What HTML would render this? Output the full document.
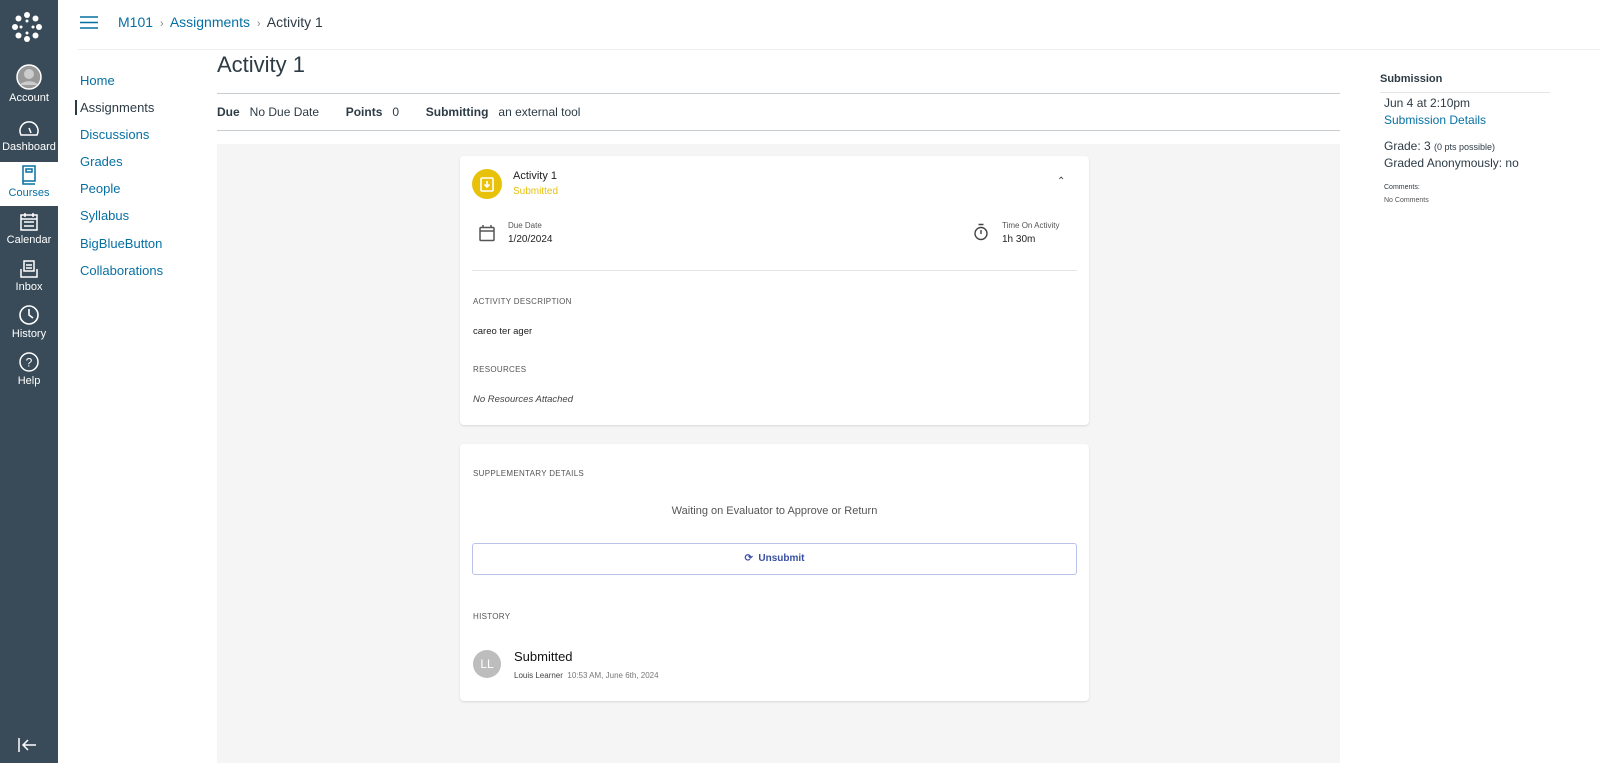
<!DOCTYPE html>
<html><head><meta charset="utf-8"><style>
*{box-sizing:border-box;margin:0;padding:0}
body{width:1600px;height:763px;overflow:hidden;font-family:"Liberation Sans",sans-serif;background:#fff;position:relative;color:#2d3b45}
.side{position:absolute;left:0;top:0;width:58px;height:763px;background:#394b58}
.nv{position:absolute;left:0;width:58px;text-align:center;color:#fff;font-size:11px}
.nv svg{display:block;margin:0 auto 2px}
.a{position:absolute;white-space:nowrap}
.cn a{position:absolute;left:80px;color:#0770a3;font-size:13px;text-decoration:none}
.card{position:absolute;left:460px;width:629px;background:#fff;border-radius:4px;box-shadow:0 1px 2px rgba(0,0,0,.12)}
.r{font-family:"Liberation Sans",sans-serif}
.lbl{position:absolute;left:13px;font-size:8px;color:#555;letter-spacing:.3px}
</style></head><body>
<div class="side">
 <svg style="position:absolute;left:10px;top:10px" width="34" height="34" viewBox="0 0 34 34" fill="#fff"><circle cx="17" cy="5" r="3"/><circle cx="17" cy="29" r="3"/><circle cx="5" cy="17" r="3"/><circle cx="29" cy="17" r="3"/><circle cx="8.5" cy="8.5" r="3"/><circle cx="25.5" cy="8.5" r="3"/><circle cx="8.5" cy="25.5" r="3"/><circle cx="25.5" cy="25.5" r="3"/><circle cx="17" cy="11" r="1.5"/><circle cx="17" cy="23" r="1.5"/><circle cx="11" cy="17" r="1.5"/><circle cx="23" cy="17" r="1.5"/></svg>
 <div class="nv" style="top:64px"><svg width="26" height="26" viewBox="0 0 26 26"><circle cx="13" cy="13" r="12" fill="#999" stroke="#fff" stroke-width="1.5"/><circle cx="13" cy="10" r="5" fill="#ccc"/><path d="M4 21c3-5 15-5 18 0" fill="#ccc"/></svg>Account</div>
 <div class="nv" style="top:119px"><svg width="22" height="20" viewBox="0 0 22 20" fill="none" stroke="#fff" stroke-width="1.5"><path d="M3 16a9 9 0 1 1 16 0z"/><path d="M11 9l2 5"/></svg>Dashboard</div>
 <div class="nv" style="top:162px;height:44px;background:#fff;color:#0770a3;padding-top:3px"><svg width="18" height="20" viewBox="0 0 18 20" fill="none" stroke="#0770a3" stroke-width="1.5"><rect x="3" y="1" width="12" height="15"/><rect x="6" y="4" width="6" height="3"/><path d="M3 16v3h12"/></svg>Courses</div>
 <div class="nv" style="top:212px"><svg width="20" height="20" viewBox="0 0 20 20" fill="none" stroke="#fff" stroke-width="1.5"><rect x="2" y="3" width="16" height="15"/><path d="M2 7h16M6 1v4M14 1v4M5 10h10M5 14h10"/></svg>Calendar</div>
 <div class="nv" style="top:259px"><svg width="20" height="20" viewBox="0 0 20 20" fill="none" stroke="#fff" stroke-width="1.5"><rect x="5" y="2" width="10" height="10"/><path d="M2 10v8h16v-8M7 6h6M7 9h6"/></svg>Inbox</div>
 <div class="nv" style="top:304px"><svg width="22" height="22" viewBox="0 0 22 22" fill="none" stroke="#fff" stroke-width="1.6"><circle cx="11" cy="11" r="9"/><path d="M11 5v6l4 3"/></svg>History</div>
 <div class="nv" style="top:351px"><svg width="22" height="22" viewBox="0 0 22 22" fill="none" stroke="#fff" stroke-width="1.5"><circle cx="11" cy="11" r="9"/><text x="11" y="15.5" text-anchor="middle" font-size="12" fill="#fff" stroke="none" font-family="Liberation Sans">?</text></svg>Help</div>
 <svg style="position:absolute;left:18px;top:738px" width="20" height="14" viewBox="0 0 20 14" fill="none" stroke="#fff" stroke-width="1.5"><path d="M1 0v14M18 7H5M10 2L5 7l5 5"/></svg>
</div>
<svg style="position:absolute;left:80px;top:16px" width="18" height="13" viewBox="0 0 18 13" stroke="#0770a3" stroke-width="1.5"><path d="M0 1h18M0 6.5h18M0 12h18"/></svg>
<div class="a" style="left:118px;top:14px;font-size:14px;color:#0770a3">M101 <span style="color:#888;font-size:11px">&nbsp;›&nbsp;</span> Assignments <span style="color:#888;font-size:11px">&nbsp;›&nbsp;</span> <span style="color:#2d3b45">Activity 1</span></div>
<div class="a" style="left:78px;top:49px;width:1522px;border-top:1px solid #eee"></div>
<div class="cn">
<a style="top:73px">Home</a>
<a style="top:100px;color:#2d3b45;border-left:2px solid #2d3b45;left:75px;padding-left:3px">Assignments</a>
<a style="top:127px">Discussions</a><a style="top:154px">Grades</a><a style="top:181px">People</a><a style="top:208px">Syllabus</a><a style="top:236px">BigBlueButton</a><a style="top:263px">Collaborations</a>
</div>
<div class="a" style="left:217px;top:52px;font-size:22px">Activity 1</div>
<div class="a" style="left:217px;top:93px;width:1123px;border-top:1px solid #c7cdd1"></div>
<div class="a" style="left:217px;top:105px;font-size:12px"><b>Due</b>&nbsp;&nbsp; No Due Date &nbsp;&nbsp;&nbsp;&nbsp;&nbsp;&nbsp;&nbsp;<b>Points</b>&nbsp;&nbsp; 0 &nbsp;&nbsp;&nbsp;&nbsp;&nbsp;&nbsp;&nbsp;<b>Submitting</b>&nbsp;&nbsp; an external tool</div>
<div class="a" style="left:217px;top:130px;width:1123px;border-top:1px solid #c7cdd1"></div>
<div class="a" style="left:217px;top:144px;width:1123px;height:619px;background:#f5f5f5"></div>
<div class="card r" style="top:156px;height:269px">
 <div class="a" style="left:12px;top:13px;width:30px;height:30px;border-radius:50%;background:#e8c10a"></div>
 <svg class="a" style="left:20px;top:20px" width="14" height="16" viewBox="0 0 14 16" fill="none" stroke="#fff" stroke-width="1.6"><rect x="1" y="2" width="12" height="13" rx="1"/><path d="M7 5v6M4.5 8.5L7 11l2.5-2.5"/></svg>
 <div class="a" style="left:53px;top:14px;font-size:11px;color:#222">Activity 1</div>
 <div class="a" style="left:53px;top:30px;font-size:10px;color:#e8c10a">Submitted</div>
 <div class="a" style="left:597px;top:20px;font-size:10px;color:#444">&#8963;</div>
 <svg class="a" style="left:19px;top:69px" width="16" height="17" viewBox="0 0 16 17" fill="none" stroke="#555" stroke-width="1.5"><rect x="1" y="2.5" width="14" height="13" rx="1"/><path d="M1 6h14M4 0v3M12 0v3"/></svg>
 <div class="a" style="left:48px;top:65px;font-size:8px;color:#555">Due Date</div>
 <div class="a" style="left:48px;top:78px;font-size:10px;color:#222">1/20/2024</div>
 <svg class="a" style="left:513px;top:67px" width="16" height="18" viewBox="0 0 16 18" fill="none" stroke="#444" stroke-width="1.4"><circle cx="8" cy="10.5" r="6"/><path d="M5.5 1.5h5M8 7v4"/></svg>
 <div class="a" style="left:542px;top:65px;font-size:8px;color:#555">Time On Activity</div>
 <div class="a" style="left:542px;top:78px;font-size:10px;color:#222">1h 30m</div>
 <div class="a" style="left:12px;top:114px;width:605px;border-top:1px solid #e5e5e5"></div>
 <div class="lbl" style="top:141px">ACTIVITY DESCRIPTION</div>
 <div class="a" style="left:13px;top:170px;font-size:9.5px;color:#222">careo ter ager</div>
 <div class="lbl" style="top:209px">RESOURCES</div>
 <div class="a" style="left:13px;top:238px;font-size:9.5px;color:#444;font-style:italic">No Resources Attached</div>
</div>
<div class="card r" style="top:444px;height:257px">
 <div class="lbl" style="top:25px">SUPPLEMENTARY DETAILS</div>
 <div class="a" style="left:0;width:629px;text-align:center;top:61px;font-size:11px;color:#555">Waiting on Evaluator to Approve or Return</div>
 <div class="a" style="left:12px;top:99px;width:605px;height:32px;border:1px solid #b9c3ea;border-radius:3px;text-align:center;line-height:30px;font-size:10px;color:#3a4fa3;font-weight:bold">&#10227;&nbsp; Unsubmit</div>
 <div class="lbl" style="top:168px">HISTORY</div>
 <div class="a" style="left:13px;top:206px;width:28px;height:28px;border-radius:50%;background:#bdbdbd;color:#fff;font-size:12px;text-align:center;line-height:28px">LL</div>
 <div class="a" style="left:54px;top:205px;font-size:13px;color:#111">Submitted</div>
 <div class="a" style="left:54px;top:227px;font-size:8px;color:#444">Louis Learner &nbsp;<span style="color:#777">10:53 AM, June 6th, 2024</span></div>
</div>
<div class="a" style="left:1380px;top:73px;font-size:11px;font-weight:bold">Submission</div>
<div class="a" style="left:1380px;top:92px;width:170px;border-top:1px solid #e5e5e5"></div>
<div class="a" style="left:1384px;top:96px;font-size:12px">Jun 4 at 2:10pm</div>
<div class="a" style="left:1384px;top:113px;font-size:12px;color:#0770a3">Submission Details</div>
<div class="a" style="left:1384px;top:139px;font-size:12px">Grade: 3 <span style="font-size:9px">(0 pts possible)</span></div>
<div class="a" style="left:1384px;top:156px;font-size:12px">Graded Anonymously: no</div>
<div class="a" style="left:1384px;top:184px;font-size:7px">Comments:</div>
<div class="a" style="left:1384px;top:197px;font-size:7px;color:#555">No Comments</div>
</body></html>
